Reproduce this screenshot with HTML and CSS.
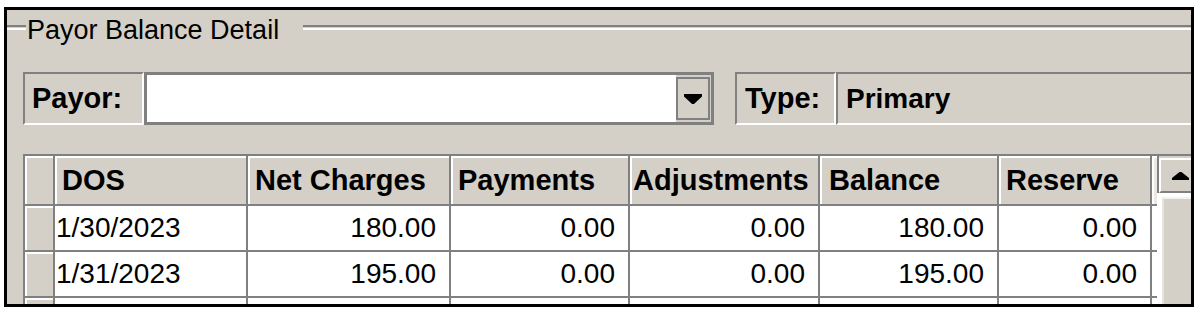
FILE: index.html
```html
<!DOCTYPE html>
<html>
<head>
<meta charset="utf-8">
<link rel="stylesheet" href="styles.css">
</head>
<body>
<div class="frame">
  <div class="group-title">
    <span class="etch etch-left"></span>
    <span class="title">Payor Balance Detail</span>
    <span class="etch etch-right"></span>
  </div>
  <div class="payor-row">
    <div class="label-box payor-label">Payor:</div>
    <div class="combo">
      <div class="combo-input"></div>
      <div class="combo-btn">
        <svg width="18" height="10" viewBox="0 0 18 10"><polygon points="0,0 18,0 18,2.5 10,10 8,10 0,2.5" fill="#000"/></svg>
      </div>
    </div>
    <div class="label-box type-label">Type:</div>
    <div class="value-box">Primary</div>
  </div>
  <div class="grid-wrap">
    <div class="grid">
      <div class="sel"></div>
      <div class="hd">DOS</div>
      <div class="hd">Net Charges</div>
      <div class="hd">Payments</div>
      <div class="hd hd-tight">Adjustments</div>
      <div class="hd hd-wide">Balance</div>
      <div class="hd">Reserve</div>
      <div class="hd hd-spacer"></div>

      <div class="sel"></div>
      <div class="cell date">1/30/2023</div>
      <div class="cell">180.00</div>
      <div class="cell">0.00</div>
      <div class="cell">0.00</div>
      <div class="cell">180.00</div>
      <div class="cell">0.00</div>
      <div class="spc"></div>

      <div class="sel"></div>
      <div class="cell date">1/31/2023</div>
      <div class="cell">195.00</div>
      <div class="cell">0.00</div>
      <div class="cell">0.00</div>
      <div class="cell">195.00</div>
      <div class="cell">0.00</div>
      <div class="spc"></div>

      <div class="sel"></div>
      <div class="cell"></div>
      <div class="cell"></div>
      <div class="cell"></div>
      <div class="cell"></div>
      <div class="cell"></div>
      <div class="cell"></div>
      <div class="spc"></div>
    </div>
    <div class="scrollbar">
      <div class="sb-head">
        <div class="sb-up">
          <svg width="17" height="8" viewBox="0 0 17 8"><polygon points="7.5,0 9.5,0 17,6 17,8 0,8 0,6" fill="#000"/></svg>
        </div>
      </div>
      <div class="sb-track">
        <div class="sb-thumb"></div>
      </div>
    </div>
  </div>
</div>
</body>
</html>
```

FILE: styles.css
```css
* {
  box-sizing: border-box;
}

html,
body {
  margin: 0;
  padding: 0;
  background: #fff;
}

body {
  font-family: "Liberation Sans", Arial, sans-serif;
  color: #000;
}

.frame {
  margin: 7px 0 0 4px;
  width: 1190px;
  height: 300px;
  border: 3px solid #000;
  background: #d4d0c8;
  overflow: hidden;
}

/* group box caption with etched line */
.group-title {
  display: flex;
  margin-top: 5px;
  height: 30px;
}

.etch {
  height: 5px;
  margin-top: 10px;
  border-top: 2px solid #808080;
  border-bottom: 2px solid #fff;
}

.etch-left {
  flex: none;
  width: 19px;
}

.etch-right {
  flex: 1;
}

.title {
  flex: none;
  font-size: 27px;
  line-height: 30px;
  padding: 0 24px 0 1px;
  white-space: nowrap;
}

/* payor / type row */
.payor-row {
  display: flex;
  margin: 27px 0 0 16px;
  height: 53px;
}

.label-box {
  flex: none;
  display: flex;
  align-items: center;
  height: 53px;
  border-top: 2px solid #808080;
  border-left: 2px solid #808080;
  border-bottom: 2px solid #fff;
  border-right: 2px solid #fff;
  font-weight: bold;
  font-size: 29px;
  padding-left: 7px;
  white-space: nowrap;
}

.payor-label {
  width: 121px;
}

.combo {
  flex: none;
  display: flex;
  width: 570px;
  height: 53px;
  border: 3px solid #808080;
  background: #d4d0c8;
}

.combo-input {
  flex: 1;
  background: #fff;
}

.combo-btn {
  flex: none;
  width: 34px;
  margin: 2px 1px 2px 0;
  border: 2px solid #808080;
  background: #d4d0c8;
  display: flex;
  align-items: center;
  justify-content: center;
}

.type-label {
  width: 101px;
  margin-left: 21px;
  padding-left: 8px;
}

.value-box {
  flex: 1;
  display: flex;
  align-items: center;
  height: 53px;
  border-top: 2px solid #808080;
  border-left: 2px solid #808080;
  border-bottom: 2px solid #fff;
  padding-left: 8px;
  font-weight: bold;
  font-size: 28px;
  white-space: nowrap;
}

/* grid */
.grid-wrap {
  display: flex;
  margin: 29px 0 0 16px;
  height: 150px;
  overflow: hidden;
}

.grid {
  flex: none;
  display: grid;
  grid-template-columns: 28px 191px 201px 177px 188px 177px 151px 5px;
  grid-template-rows: 48px 44px 44px 44px;
  gap: 2px;
  padding: 2px 0 0 2px;
  background: #808080;
  align-content: start;
}

.sel {
  background: #d4d0c8;
  box-shadow: inset 2px 2px 0 #fff;
}

.hd {
  background: #d4d0c8;
  box-shadow: inset 2px 2px 0 #fff;
  display: flex;
  align-items: center;
  padding-left: 7px;
  font-weight: bold;
  font-size: 29px;
  white-space: nowrap;
  overflow: hidden;
}

.hd-tight {
  padding-left: 3px;
}

.hd-wide {
  padding-left: 9px;
}

.hd-spacer {
  padding: 0;
  background: #ece9e4;
}

.cell {
  background: #fff;
  display: flex;
  align-items: center;
  justify-content: flex-end;
  padding-right: 13px;
  font-size: 28px;
  white-space: nowrap;
}

.cell.date {
  justify-content: flex-start;
  padding: 0 0 0 1px;
}

.spc {
  background: #fff;
}

/* vertical scrollbar */
.scrollbar {
  flex: 1;
  display: flex;
  flex-direction: column;
  border-top: 2px solid #808080;
  background: #fff;
}

.sb-head {
  flex: none;
  height: 37px;
  padding-top: 2px;
  border-left: 2px solid #808080;
  background: #d4d0c8;
}

.sb-up {
  height: 35px;
  display: flex;
  align-items: center;
  padding-left: 11px;
  border-top: 2px solid #fff;
  border-left: 2px solid #fff;
  border-bottom: 2px solid #808080;
  background: #d4d0c8;
}

.sb-track {
  flex: 1;
  padding: 4px 0 0 5px;
  background: #fff;
}

.sb-thumb {
  height: 100%;
  background: #d4d0c8;
  border-top: 2px solid #f4f3f0;
  border-left: 2px solid #e6e4df;
}
```
